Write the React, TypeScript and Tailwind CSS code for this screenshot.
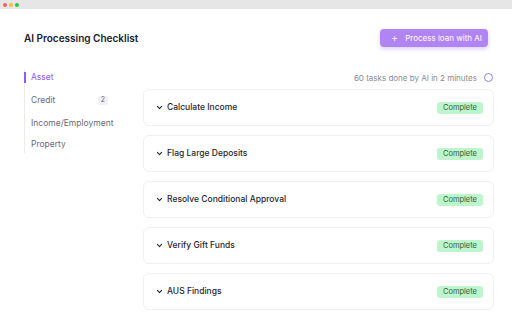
import React from "react";

const tasks = [
  "Calculate Income",
  "Flag Large Deposits",
  "Resolve Conditional Approval",
  "Verify Gift Funds",
  "AUS Findings",
];

function Chevron() {
  return (
    <svg width="7" height="7" viewBox="0 0 10 10" fill="none">
      <path d="M2 3.5 L5 6.5 L8 3.5" stroke="#1f2937" strokeWidth="1.6" strokeLinecap="round" strokeLinejoin="round" />
    </svg>
  );
}

export default function App() {
  return (
    <div className="w-[512px] h-[317px] overflow-hidden bg-white flex flex-col" style={{ fontFamily: "Inter, 'Noto Sans', sans-serif" }}>
      <div className="h-[9px] bg-[#e6e6e6] flex items-center gap-[2px] pl-[3px] shrink-0">
        <span className="w-[4px] h-[4px] rounded-full bg-[#fe5f57]" />
        <span className="w-[4px] h-[4px] rounded-full bg-[#febc2e]" />
        <span className="w-[4px] h-[4px] rounded-full bg-[#28c840]" />
      </div>
      <div className="flex items-center justify-between pl-6 pr-[24px] pt-[20px]">
        <h1 className="text-[10px] font-semibold text-[#1a1a2e] leading-none">AI Processing Checklist</h1>
        <button className="h-[18px] w-[108px] rounded-[4px] bg-[#b184f4] text-white text-[8px] flex items-center justify-start pl-[11px] gap-[7px] shadow-[0_2px_4px_rgba(124,58,237,0.25)]">
          <span className="text-[11px] leading-none font-light">+</span>
          <span>Process loan with AI</span>
        </button>
      </div>
      <div className="flex pl-6 pr-[18px] pt-[22px]">
        <div className="w-[119px] shrink-0">
          <div className="border-l border-[#ececec] flex flex-col w-[84px] pb-[3px]">
            <div className="h-[11px] border-l-2 border-[#8b5cf6] -ml-px pl-[5px] flex items-center mt-[3px] text-[8.5px] text-[#8b5cf6]">Asset</div>
            <div className="mt-[12px] pl-[6px] flex items-center justify-between text-[8.5px] text-[#6b6b75] h-[11px]">
              <span>Credit</span>
              <span className="w-[10px] h-[9px] rounded-[2px] bg-[#f1f1f3] text-[7px] flex items-center justify-center">2</span>
            </div>
            <div className="mt-[12px] pl-[6px] text-[8.5px] text-[#6b6b75] h-[11px] flex items-center">Income/Employment</div>
            <div className="mt-[10px] pl-[6px] text-[8.5px] text-[#6b6b75] h-[11px] flex items-center">Property</div>
          </div>
        </div>
        <div className="flex-1 flex flex-col">
          <div className="flex items-center justify-end gap-[7px] h-[11px] mt-[3px] pr-[1px]">
            <span className="text-[8px] text-[#8a8a94]">60 tasks done by AI in 2 minutes</span>
            <span className="w-[9px] h-[9px] rounded-full border-[1.5px] border-[#8b83e0]" />
          </div>
          <div className="flex flex-col gap-[9px] mt-[6px]">
            {tasks.map((t) => (
              <div key={t} className="h-[37px] rounded-[6px] border border-[#f0f0f2] bg-white flex items-center justify-between pl-[12px] pr-[10px]">
                <div className="flex items-center gap-[4px]">
                  <Chevron />
                  <span className="text-[8.5px] font-medium text-[#1f1f2e]">{t}</span>
                </div>
                <span className="h-[12px] px-[6px] rounded-[3px] bg-[#bdf5cd] text-[7.5px] text-[#2f5d40] flex items-center">Complete</span>
              </div>
            ))}
          </div>
        </div>
      </div>
    </div>
  );
}
